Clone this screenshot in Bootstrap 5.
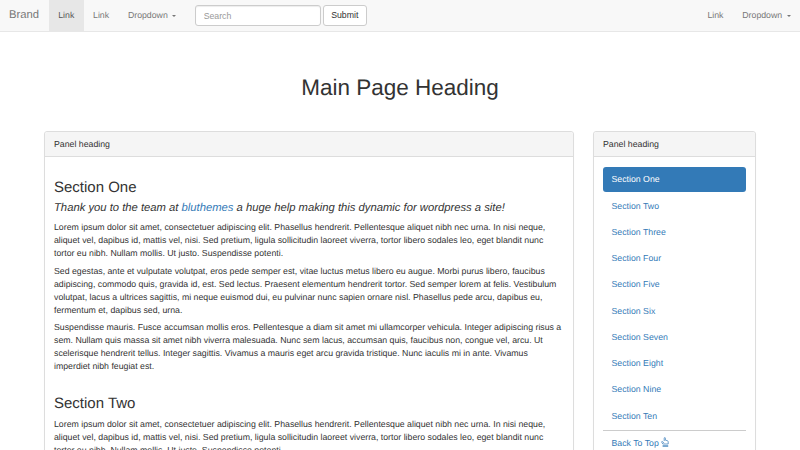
<!DOCTYPE html>
<html lang="en"><head><meta charset="utf-8">
<title>Main Page Heading</title>
<link href="https://cdn.jsdelivr.net/npm/bootstrap@5.3.0/dist/css/bootstrap.min.css" rel="stylesheet">
<style>
html,body{height:450px;overflow:hidden}
body{font-family:"Liberation Sans",Arial,sans-serif;font-size:8.75px;line-height:13px;color:#333;background:#fff;text-rendering:geometricPrecision}
.topbar{height:32px;background:#f8f8f8;border-bottom:1px solid #e7e7e7;padding:0;align-items:stretch}
.brandname{font-size:11.25px;color:#777;padding:0 9.8px 0 9px;line-height:31px;text-decoration:none}
.toplink{font-size:8.75px;color:#777;padding:0 9.4px;line-height:31px;text-decoration:none;display:block}
.toplink.on{background:#e7e7e7;color:#555}
.caretmark{display:inline-block;width:0;height:0;border-top:2.5px solid #777;border-left:2.5px solid transparent;border-right:2.5px solid transparent;vertical-align:middle;margin-left:2px}
.searchbox{width:126px;height:21px;font-size:8.75px;border:1px solid #ccc;border-radius:3px;padding:0 8px;margin-left:9px;box-shadow:inset 0 1px 1px rgba(0,0,0,.075);color:#333}
.searchbox::placeholder{color:#999}
.submitbtn{height:21px;font-size:8.75px;line-height:19px;padding:0 7.5px;margin-left:2px;border:1px solid #ccc;border-radius:3px;background:#fff;color:#333}
.pagetitle{font-size:22.5px;line-height:27px;font-weight:500;text-align:center;margin:42px 0 30px;color:#333}
.wrap{padding:0 44px;gap:19px;align-items:flex-start}
.mainpanel{width:530px;flex:none}
.sidepanel{width:163px;flex:none}
.panelbox{border:1px solid #ddd;border-radius:3px;box-shadow:0 1px 1px rgba(0,0,0,.05);--bs-card-bg:#fff}
.panelhead{background:#f5f5f5;border-bottom:1px solid #ddd;padding:0 9px;height:25px;line-height:24px;font-size:8.75px;color:#333;border-radius:3px 3px 0 0}
.mainbody{padding:22px 9px 0}
.secthead{font-size:15px;line-height:18px;font-weight:500;margin:0 0 3px;color:#333}
.thanks{font-size:11.25px;line-height:16px;font-style:italic;margin:0 0 5px;color:#333}
.thanks a,.pillgroup a,.backtop{color:#337ab7;text-decoration:none}
.bodytext{font-size:8.75px;line-height:13px;margin:0 0 4.6px}
.secttwo{margin-top:22px;margin-bottom:5px}
.sidebody{padding:10px 9px 0}
.pillgroup{flex-direction:column}
.pillgroup a{display:block;font-size:8.75px;line-height:12.5px;padding:6.25px 8.5px;border-radius:3px;margin-bottom:1.25px}
.pillgroup a.current{background:#337ab7;color:#fff}
.sidediv{border-top:1px solid #ccc;margin:0;opacity:1}
.backtop{display:block;font-size:8.75px;line-height:12.5px;padding:6px 8.5px}
.handicon{width:8px;height:10px;vertical-align:-1px}
</style></head><body>
<nav class="navbar p-0 d-flex topbar flex-nowrap justify-content-start">
<a class="brandname" href="#">Brand</a>
<a class="toplink on" href="#">Link</a>
<a class="toplink" href="#">Link</a>
<a class="toplink" href="#">Dropdown <span class="caretmark"></span></a>
<form class="d-flex align-items-center m-0"><input class="searchbox" placeholder="Search"><button type="button" class="submitbtn">Submit</button></form>
<div class="ms-auto d-flex">
<a class="toplink" href="#">Link</a>
<a class="toplink" href="#">Dropdown <span class="caretmark"></span></a>
</div>
</nav>
<h1 class="pagetitle">Main Page Heading</h1>
<div class="d-flex wrap">
<div class="card panelbox mainpanel">
<div class="panelhead">Panel heading</div>
<div class="mainbody">
<h2 class="secthead">Section One</h2>
<h4 class="thanks">Thank you to the team at <a href="#">bluthemes</a> a huge help making this dynamic for wordpress a site!</h4>
<p class="bodytext">Lorem ipsum dolor sit amet, consectetuer adipiscing elit. Phasellus hendrerit. Pellentesque aliquet nibh nec urna. In nisi neque, aliquet vel, dapibus id, mattis vel, nisi. Sed pretium, ligula sollicitudin laoreet viverra, tortor libero sodales leo, eget blandit nunc tortor eu nibh. Nullam mollis. Ut justo. Suspendisse potenti.</p>
<p class="bodytext">Sed egestas, ante et vulputate volutpat, eros pede semper est, vitae luctus metus libero eu augue. Morbi purus libero, faucibus adipiscing, commodo quis, gravida id, est. Sed lectus. Praesent elementum hendrerit tortor. Sed semper lorem at felis. Vestibulum volutpat, lacus a ultrices sagittis, mi neque euismod dui, eu pulvinar nunc sapien ornare nisl. Phasellus pede arcu, dapibus eu, fermentum et, dapibus sed, urna.</p>
<p class="bodytext">Suspendisse mauris. Fusce accumsan mollis eros. Pellentesque a diam sit amet mi ullamcorper vehicula. Integer adipiscing risus a sem. Nullam quis massa sit amet nibh viverra malesuada. Nunc sem lacus, accumsan quis, faucibus non, congue vel, arcu. Ut scelerisque hendrerit tellus. Integer sagittis. Vivamus a mauris eget arcu gravida tristique. Nunc iaculis mi in ante. Vivamus imperdiet nibh feugiat est.</p>
<h2 class="secthead secttwo">Section Two</h2>
<p class="bodytext">Lorem ipsum dolor sit amet, consectetuer adipiscing elit. Phasellus hendrerit. Pellentesque aliquet nibh nec urna. In nisi neque, aliquet vel, dapibus id, mattis vel, nisi. Sed pretium, ligula sollicitudin laoreet viverra, tortor libero sodales leo, eget blandit nunc tortor eu nibh. Nullam mollis. Ut justo. Suspendisse potenti.</p>
</div></div>
<div class="card panelbox sidepanel">
<div class="panelhead">Panel heading</div>
<div class="sidebody">
<div class="nav pillgroup">
<a class="current" href="#">Section One</a><a href="#">Section Two</a><a href="#">Section Three</a><a href="#">Section Four</a><a href="#">Section Five</a><a href="#">Section Six</a><a href="#">Section Seven</a><a href="#">Section Eight</a><a href="#">Section Nine</a><a href="#">Section Ten</a>
</div>
<hr class="sidediv">
<a class="backtop" href="#">Back To Top <svg class="handicon" viewBox="0 0 8 10" fill="none" stroke="#337ab7" stroke-width=".7"><path d="M3.2 4V1.2a.6.6 0 0 1 1.2 0V3.2l2 .5c.6.2.8.5.8 1V7H1.8L.7 5.2c-.3-.6.4-1 .8-.6L3.2 6"/><path d="M1.6 8.6h5.6"/><path d="M1.6 9.6h5.6"/></svg></a>
</div></div>
</div>
<script src="https://cdn.jsdelivr.net/npm/bootstrap@5.3.0/dist/js/bootstrap.bundle.min.js"></script>
</body></html>
